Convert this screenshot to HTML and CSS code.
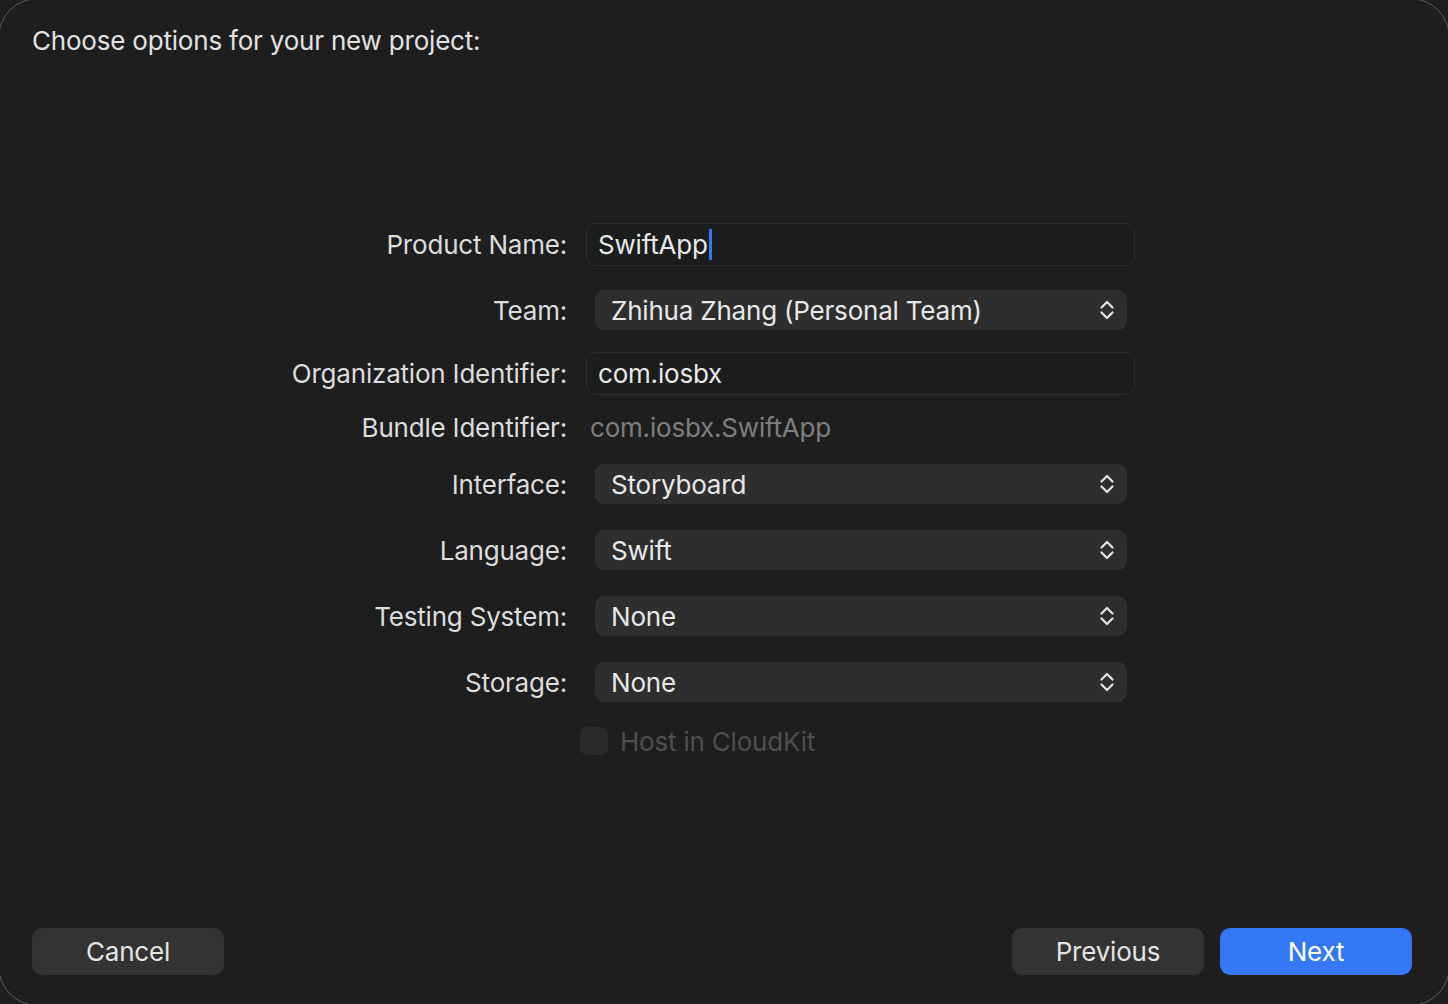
FILE: index.html
```html
<!DOCTYPE html>
<html>

<head>
    <meta name="viewport" content="width=device-width, initial-scale=1.0">
    <title>New Project</title>
    <link rel="stylesheet" href="styles.css">
</head>

<body>
    <div id="sheet">
        <div id="title">Choose options for your new project:</div>

        <div id="options">
            <div class="label">Product Name:</div>
            <div class="field">SwiftApp<span class="caret"></span></div>

            <div class="label">Team:</div>
            <div class="popup">
                <span>Zhihua Zhang (Personal Team)</span>
                <svg class="chevrons" width="16" height="24" viewBox="0 0 16 24"><path d="M2.5 9.5 L8 4 L13.5 9.5 M2.5 14.5 L8 20 L13.5 14.5"/></svg>
            </div>

            <div class="label">Organization Identifier:</div>
            <div class="field">com.iosbx</div>

            <div class="label">Bundle Identifier:</div>
            <div class="static">com.iosbx.SwiftApp</div>

            <div class="label">Interface:</div>
            <div class="popup">
                <span>Storyboard</span>
                <svg class="chevrons" width="16" height="24" viewBox="0 0 16 24"><path d="M2.5 9.5 L8 4 L13.5 9.5 M2.5 14.5 L8 20 L13.5 14.5"/></svg>
            </div>

            <div class="label">Language:</div>
            <div class="popup">
                <span>Swift</span>
                <svg class="chevrons" width="16" height="24" viewBox="0 0 16 24"><path d="M2.5 9.5 L8 4 L13.5 9.5 M2.5 14.5 L8 20 L13.5 14.5"/></svg>
            </div>

            <div class="label">Testing System:</div>
            <div class="popup">
                <span>None</span>
                <svg class="chevrons" width="16" height="24" viewBox="0 0 16 24"><path d="M2.5 9.5 L8 4 L13.5 9.5 M2.5 14.5 L8 20 L13.5 14.5"/></svg>
            </div>

            <div class="label">Storage:</div>
            <div class="popup">
                <span>None</span>
                <svg class="chevrons" width="16" height="24" viewBox="0 0 16 24"><path d="M2.5 9.5 L8 4 L13.5 9.5 M2.5 14.5 L8 20 L13.5 14.5"/></svg>
            </div>

            <div class="label"></div>
            <div class="check disabled">
                <span class="box"></span>
                <span>Host in CloudKit</span>
            </div>
        </div>

        <div id="footer">
            <button class="btn">Cancel</button>
            <div class="nav-buttons">
                <button class="btn">Previous</button>
                <button class="btn primary">Next</button>
            </div>
        </div>
    </div>
</body>

</html>
```

FILE: styles.css
```css
body {
    margin: 0;
    background: #1e1e1e;
    color: #dedede;
    font-family: Inter, "Noto Sans", sans-serif;
    font-size: 26px;
    letter-spacing: -0.2px;
    overflow: hidden;
    -webkit-user-select: none;
    user-select: none;
}

/* 整个面板 */
#sheet {
    position: relative;
    height: 1004px;
    display: flex;
    flex-direction: column;
    background: #1e1e1e;
}

/* 窗口圆角边线（大部分在视口外） */
#sheet::after {
    content: "";
    position: absolute;
    top: -2px;
    left: -2px;
    right: -2px;
    bottom: -2px;
    border: 1px solid #5c5c5c;
    border-radius: 40px;
    pointer-events: none;
}

#title {
    padding: 26px 32px 0;
    line-height: 30px;
    color: #e2e2e2;
}

/* 表单区域 */
#options {
    display: grid;
    grid-template-columns: 567px 549px;
    grid-template-rows: 66px 66px 60px 48px 66px 66px 66px 66px 52px;
    column-gap: 19px;
    align-items: center;
    margin-top: 155px;
}

.label {
    text-align: right;
    color: #dcdcdc;
}

.field {
    height: 41px;
    display: flex;
    align-items: center;
    padding-left: 11px;
    background: #1c1d1d;
    border: 1px solid #2c2d2d;
    border-radius: 10px;
    color: #e8e8e8;
}

.caret {
    display: inline-block;
    width: 3px;
    height: 31px;
    margin-left: 1px;
    background: #3478f6;
}

.popup {
    height: 40px;
    margin: 0 8px 0 9px;
    display: flex;
    align-items: center;
    justify-content: space-between;
    padding: 0 12px 0 16px;
    background: #2e2e2e;
    border-radius: 9px;
    color: #e8e8e8;
}

.chevrons {
    fill: none;
    stroke: #e6e6e6;
    stroke-width: 2.2;
    stroke-linecap: round;
    stroke-linejoin: round;
}

.static {
    padding-left: 4px;
    color: #7e7e7e;
}

.check {
    display: flex;
    align-items: center;
    gap: 12px;
    margin-left: -6px;
}

.check .box {
    width: 28px;
    height: 28px;
    border-radius: 7px;
    background: #2a2a2a;
}

.check.disabled {
    color: #4f4f4f;
}

/* 底部按钮 */
#footer {
    margin-top: auto;
    display: flex;
    justify-content: space-between;
    padding: 0 36px 29px 32px;
}

.nav-buttons {
    display: flex;
    gap: 16px;
}

.btn {
    width: 192px;
    height: 47px;
    border: none;
    border-radius: 10px;
    background: #333333;
    color: #e4e4e4;
    font-family: inherit;
    font-size: 26px;
    letter-spacing: inherit;
    cursor: pointer;
}

.btn.primary {
    background: #3478f6;
    color: #ffffff;
}
```
